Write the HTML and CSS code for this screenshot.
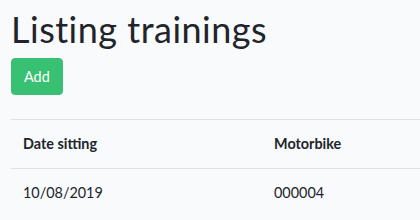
FILE: index.html
```
<!DOCTYPE html>
<html lang="en">
<head>
  <meta charset="UTF-8">
  <title>Listing trainings</title>
  <link rel="stylesheet" href="styles.css">
</head>
<body>
<div class="main">
  <h1 class="h1">Listing trainings</h1>
  <a class="btn btn-success" href="#">Add</a>

  <table class="tbl" cellpadding="0" cellspacing="0">
    <tr>
      <th class="col-date">Date sitting</th>
      <th>Motorbike</th>
    </tr>
    <tr>
      <td>10/08/2019</td>
      <td>000004</td>
    </tr>
  </table>
</div>
</body>
</html>
```

FILE: styles.css
```
body {
  margin: 0;
  background: #f8fafc;
}
.main {
  font-family: 'Lato', 'Noto Sans', sans-serif;
  font-size: 14.4px;
  line-height: 1.6;
  color: #212529;
  padding: 8px 0 0 11px;
}
.h1 {
  margin: 0 0 7px 0;
  font-size: 36px;
  font-weight: 400;
  line-height: 1.2;
  letter-spacing: 0.5px;
}
.btn {
  display: inline-block;
  padding: 6px 12px;
  border: 1px solid transparent;
  border-radius: 4px;
  text-decoration: none;
  font-size: 14.4px;
  line-height: 1.6;
}
.btn-success {
  color: #fff;
  background: #38c172;
  border-color: #38c172;
}
.tbl {
  width: 100%;
  margin-top: 24px;
  border-collapse: collapse;
}
.tbl th,
.tbl td {
  text-align: left;
  padding: 12px;
  border-top: 1px solid #dee2e6;
}
.tbl th {
  font-weight: 700;
  padding-bottom: 13px;
  border-bottom: 1px solid #dee2e6;
}
.col-date {
  width: 227px;
}
```
